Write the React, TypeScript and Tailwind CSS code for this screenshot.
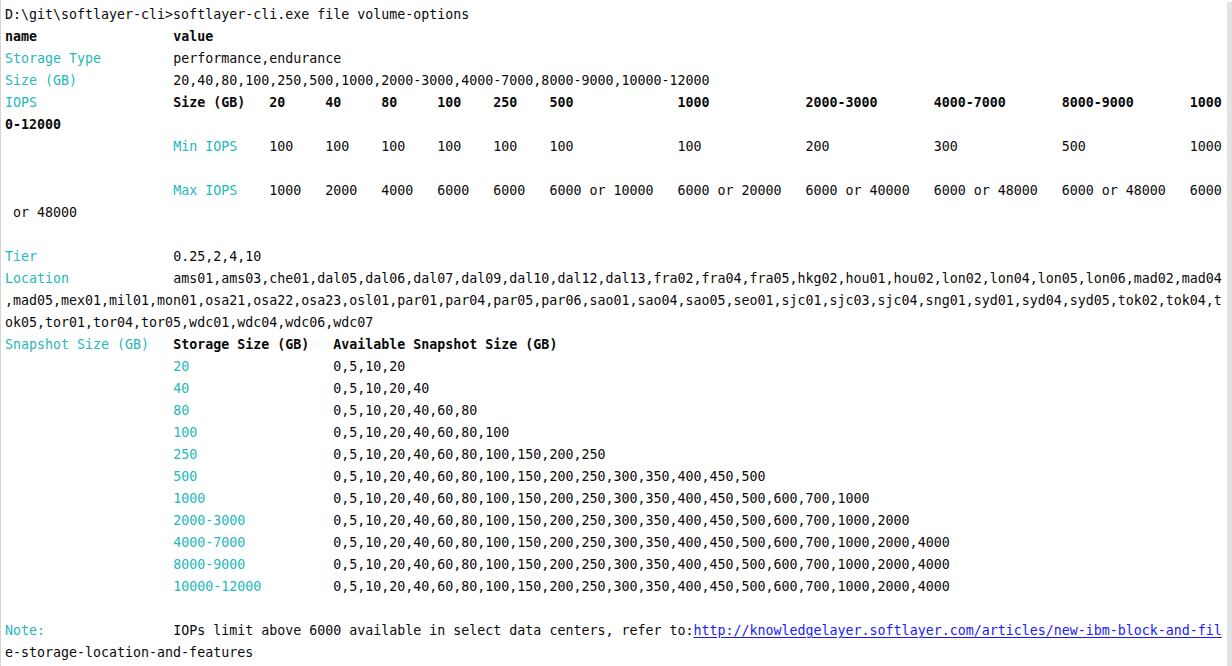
import React from "react";

type Seg = { t: string; c?: "d" | "b" | "t" | "l" };

const pad = (s: string, n: number) => (s.length >= n ? s : s + " ".repeat(n - s.length));

const hdrCols = [12, 7, 7, 7, 7, 7, 16, 16, 16, 16, 16];
const row = (cells: string[]) => cells.map((c, i) => (i < hdrCols.length ? pad(c, hdrCols[i]) : c)).join("");

const base = "0,5,10,20,40,60,80,100,150,200,250,300,350,400,450,500";
const snaps: [string, string][] = [
  ["20", "0,5,10,20"],
  ["40", "0,5,10,20,40"],
  ["80", "0,5,10,20,40,60,80"],
  ["100", "0,5,10,20,40,60,80,100"],
  ["250", "0,5,10,20,40,60,80,100,150,200,250"],
  ["500", base],
  ["1000", base + ",600,700,1000"],
  ["2000-3000", base + ",600,700,1000,2000"],
  ["4000-7000", base + ",600,700,1000,2000,4000"],
  ["8000-9000", base + ",600,700,1000,2000,4000"],
  ["10000-12000", base + ",600,700,1000,2000,4000"],
];

const lines: Seg[][] = [
  [{ t: "D:\\git\\softlayer-cli>softlayer-cli.exe file volume-options" }],
  [{ t: pad("name", 21), c: "b" }, { t: "value", c: "b" }],
  [{ t: pad("Storage Type", 21), c: "t" }, { t: "performance,endurance" }],
  [{ t: pad("Size (GB)", 21), c: "t" }, { t: "20,40,80,100,250,500,1000,2000-3000,4000-7000,8000-9000,10000-12000" }],
  [
    { t: pad("IOPS", 21), c: "t" },
    { t: row(["Size (GB)", "20", "40", "80", "100", "250", "500", "1000", "2000-3000", "4000-7000", "8000-9000", "1000"]), c: "b" },
  ],
  [{ t: "0-12000", c: "b" }],
  [
    { t: pad("", 21) },
    { t: pad("Min IOPS", 12), c: "t" },
    { t: row(["", "100", "100", "100", "100", "100", "100", "100", "200", "300", "500", "1000"]).slice(12) },
  ],
  [],
  [
    { t: pad("", 21) },
    { t: pad("Max IOPS", 12), c: "t" },
    {
      t: row(["", "1000", "2000", "4000", "6000", "6000", "6000 or 10000", "6000 or 20000", "6000 or 40000", "6000 or 48000", "6000 or 48000", "6000"]).slice(12),
    },
  ],
  [{ t: " or 48000" }],
  [],
  [{ t: pad("Tier", 21), c: "t" }, { t: "0.25,2,4,10" }],
  [
    { t: pad("Location", 21), c: "t" },
    { t: "ams01,ams03,che01,dal05,dal06,dal07,dal09,dal10,dal12,dal13,fra02,fra04,fra05,hkg02,hou01,hou02,lon02,lon04,lon05,lon06,mad02,mad04" },
  ],
  [{ t: ",mad05,mex01,mil01,mon01,osa21,osa22,osa23,osl01,par01,par04,par05,par06,sao01,sao04,sao05,seo01,sjc01,sjc03,sjc04,sng01,syd01,syd04,syd05,tok02,tok04,t" }],
  [{ t: "ok05,tor01,tor04,tor05,wdc01,wdc04,wdc06,wdc07" }],
  [{ t: pad("Snapshot Size (GB)", 21), c: "t" }, { t: pad("Storage Size (GB)", 20) + "Available Snapshot Size (GB)", c: "b" }],
  ...snaps.map(([s, v]) => [{ t: pad("", 21) }, { t: pad(s, 20), c: "t" as const }, { t: v }]),
  [],
  [
    { t: pad("Note:", 21), c: "t" },
    { t: "IOPs limit above 6000 available in select data centers, refer to:" },
    { t: "http://knowledgelayer.softlayer.com/articles/new-ibm-block-and-fil", c: "l" },
  ],
  [{ t: "e-storage-location-and-features" }],
];

const cls = {
  d: "text-[#0a0a0a]",
  b: "text-[#0a0a0a] font-bold",
  t: "text-[#25b8bc]",
  l: "text-[#1a1aff] underline underline-offset-2",
};

export default function App() {
  return (
    <div className="w-[1232px] h-[666px] bg-white flex overflow-hidden border-l border-[#d4d4d4]">
      <div
        className="flex-1 pl-[4px] pt-[4px] text-[13.3px] leading-[22px] whitespace-pre"
        style={{ fontFamily: '"DejaVu Sans Mono", "Liberation Mono", monospace' }}
      >
        {lines.map((segs, i) => (
          <div key={i} className="h-[22px]">
            {segs.map((s, j) => (
              <span key={j} className={cls[s.c ?? "d"]}>
                {s.t}
              </span>
            ))}
          </div>
        ))}
      </div>
      <div className="w-[5px] mt-[2px] bg-[#e3e3e3]" />
    </div>
  );
}
